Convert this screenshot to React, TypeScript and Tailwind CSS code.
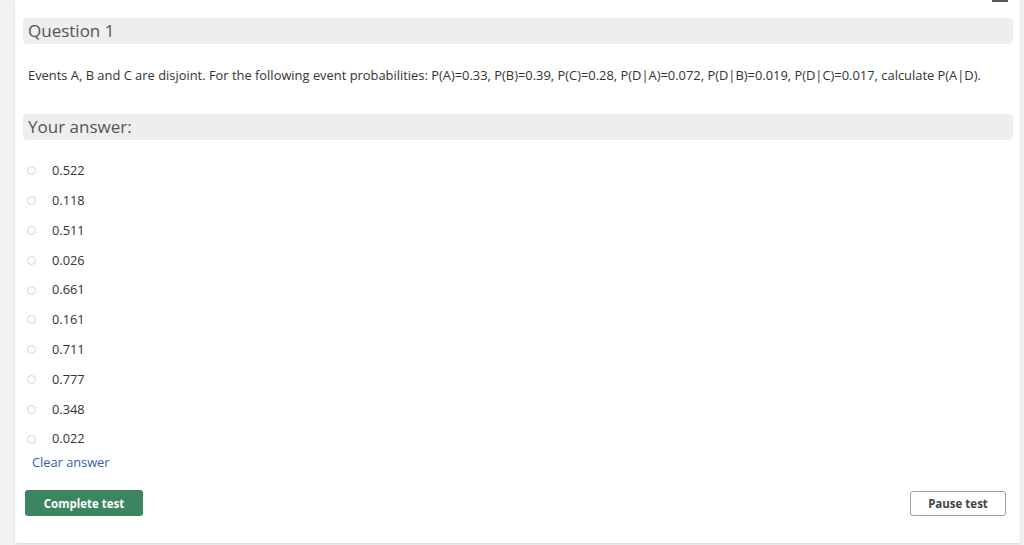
const options = [
  "0.522",
  "0.118",
  "0.511",
  "0.026",
  "0.661",
  "0.161",
  "0.711",
  "0.777",
  "0.348",
  "0.022",
];

export default function App() {
  return (
    <div
      className="relative h-[545px] w-[1024px] overflow-hidden bg-[#f2f2f2]"
      style={{ fontFamily: '"Open Sans", "Liberation Sans", sans-serif' }}
    >
      <div className="absolute right-[16px] top-0 h-[2px] w-[16px] bg-[#555]" />
      <div className="ml-[15px] flex h-[543px] w-[1005px] flex-col bg-white pl-[8px] pr-[7px] pt-[18px] shadow-[0_1px_2px_rgba(0,0,0,0.12)]">
        <div className="flex h-[26px] items-center rounded-[4px] bg-[#eeeeee] pl-[5px] text-[17px] text-[#555]">
          Question 1
        </div>
        <p className="mt-[23px] whitespace-nowrap pl-[5px] text-[12.9px] leading-[16px] text-[#333]">
          Events A, B and C are disjoint. For the following event probabilities: P(A)=0.33, P(B)=0.39,
          P(C)=0.28, P(D|A)=0.072, P(D|B)=0.019, P(D|C)=0.017, calculate P(A|D).
        </p>
        <div className="mt-[31px] flex h-[26px] items-center rounded-[4px] bg-[#eeeeee] pl-[5px] text-[17px] text-[#555]">
          Your answer:
        </div>
        <div className="mt-[16px] flex flex-col">
          {options.map((o) => (
            <label key={o} className="flex h-[29.8px] items-center">
              <span className="ml-[4px] h-[9px] w-[9px] rounded-full border border-[#d4d4d4] bg-white" />
              <span className="ml-[16px] text-[12.8px] text-[#333]">{o}</span>
            </label>
          ))}
        </div>
        <div className="mt-[-1px] pl-[9px] text-[12.8px] text-[#2f5fb3]">Clear answer</div>
        <div className="mt-[18px] flex items-center justify-between">
          <button className="ml-[2px] h-[26px] w-[118px] rounded-[3px] bg-[#3b8660] text-[11.5px] font-bold text-white">
            Complete test
          </button>
          <button className="mr-[7px] h-[25px] w-[96px] rounded-[3px] border border-[#a79aa7] bg-white text-[11.5px] font-bold text-[#444]">
            Pause test
          </button>
        </div>
      </div>
    </div>
  );
}
